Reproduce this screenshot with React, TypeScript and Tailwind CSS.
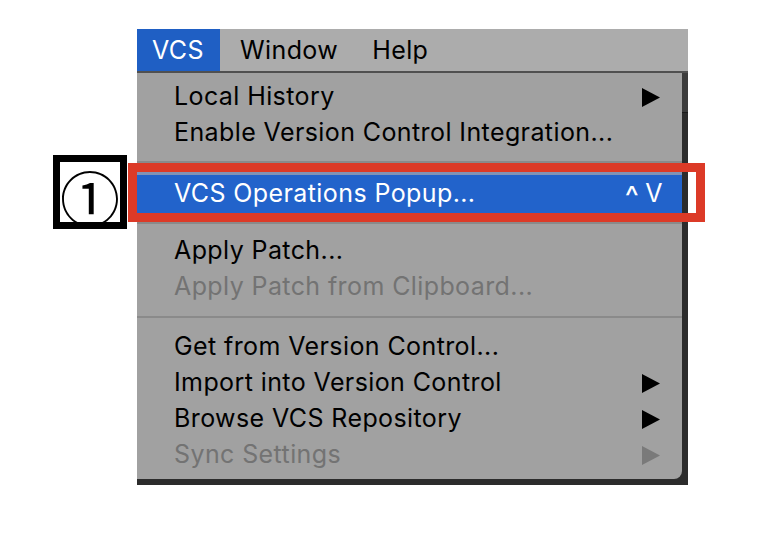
import React from "react";

type Item = {
  label: string;
  disabled?: boolean;
  submenu?: boolean;
};

const font = { fontFamily: "Inter, 'Liberation Sans', sans-serif" };

const Arrow = ({ disabled }: { disabled?: boolean }) => (
  <svg width="18" height="19" viewBox="0 0 18 19">
    <polygon points="0,0 18,9.5 0,19" fill={disabled ? "#7a7a7a" : "#000000"} />
  </svg>
);

const Row = ({ item }: { item: Item }) => (
  <div
    className={`flex h-[36px] items-center justify-between pl-[37px] pr-[22px] text-[25px] tracking-[0.4px] ${
      item.disabled ? "text-[#737373]" : "text-black"
    }`}
  >
    <span>{item.label}</span>
    {item.submenu && <Arrow disabled={item.disabled} />}
  </div>
);

const Separator = ({ h }: { h: string }) => (
  <div className={`flex ${h} items-center`}>
    <div className="h-[2px] w-full bg-[#8a8a8a]" />
  </div>
);

export default function App() {
  return (
    <div className="relative h-[545px] w-[768px] overflow-hidden bg-white" style={font}>
      <div className="pl-[137px] pt-[29px]">
        <div className="flex h-[456px] w-[551px] flex-col bg-[#2c2c2c]">
          {/* menu bar */}
          <div className="flex h-[44px] items-stretch border-b-2 border-[#505050] bg-[#acacac] pt-[2px] text-[25px] tracking-[0.4px] text-black">
            <div className="-mt-[2px] flex w-[83px] items-center bg-[#1f5fc4] pl-[15px] pt-[2px] text-white">VCS</div>
            <div className="flex items-center pl-[20px]">Window</div>
            <div className="flex items-center pl-[34px]">Help</div>
          </div>

          <div className="flex flex-1">
            {/* dropdown */}
            <div className="flex flex-1 flex-col rounded-br-[8px] bg-[#a1a1a1] pb-[6px] pt-[6px]">
              <Row item={{ label: "Local History", submenu: true }} />
              <Row item={{ label: "Enable Version Control Integration..." }} />
              <Separator h="h-[21px]" />
              <div className="flex h-[41px] items-center justify-between border-t-[3px] border-[#8193b6] bg-[#2263cb] pl-[37px] pr-[19px] text-[25px] tracking-[0.4px] text-white">
                <span>VCS Operations Popup...</span>
                <span className="flex items-center gap-[6px]">
                  <span className="pt-[4px] text-[30px] leading-none">^</span>
                  <span>V</span>
                </span>
              </div>
              <Separator h="h-[20px]" />
              <Row item={{ label: "Apply Patch..." }} />
              <Row item={{ label: "Apply Patch from Clipboard...", disabled: true }} />
              <Separator h="h-[24px]" />
              <Row item={{ label: "Get from Version Control..." }} />
              <Row item={{ label: "Import into Version Control", submenu: true }} />
              <Row item={{ label: "Browse VCS Repository", submenu: true }} />
              <Row item={{ label: "Sync Settings", submenu: true, disabled: true }} />
            </div>
            {/* window edge behind menu */}
            <div className="flex w-[6px] flex-col">
              <div className="h-[40px] border-b border-[#1a1a1a] bg-[#3c3c3c]" />
              <div className="flex-1 bg-[#2c2c2c]" />
            </div>
          </div>
          <div className="h-[6px]" />
        </div>
      </div>

      {/* annotation: red highlight frame */}
      <div className="absolute left-[128px] top-[163px] h-[59px] w-[577px] border-[9px] border-[#dc3a27]" />

      {/* annotation: step number */}
      <div className="absolute left-[53px] top-[155px] flex h-[74px] w-[74px] items-center justify-center border-[7px] border-black bg-white">
        <span
          className="pt-[7px] text-[60px] leading-none text-black"
          style={{ fontFamily: "'Noto Sans CJK JP', sans-serif" }}
        >
          ①
        </span>
      </div>
    </div>
  );
}
